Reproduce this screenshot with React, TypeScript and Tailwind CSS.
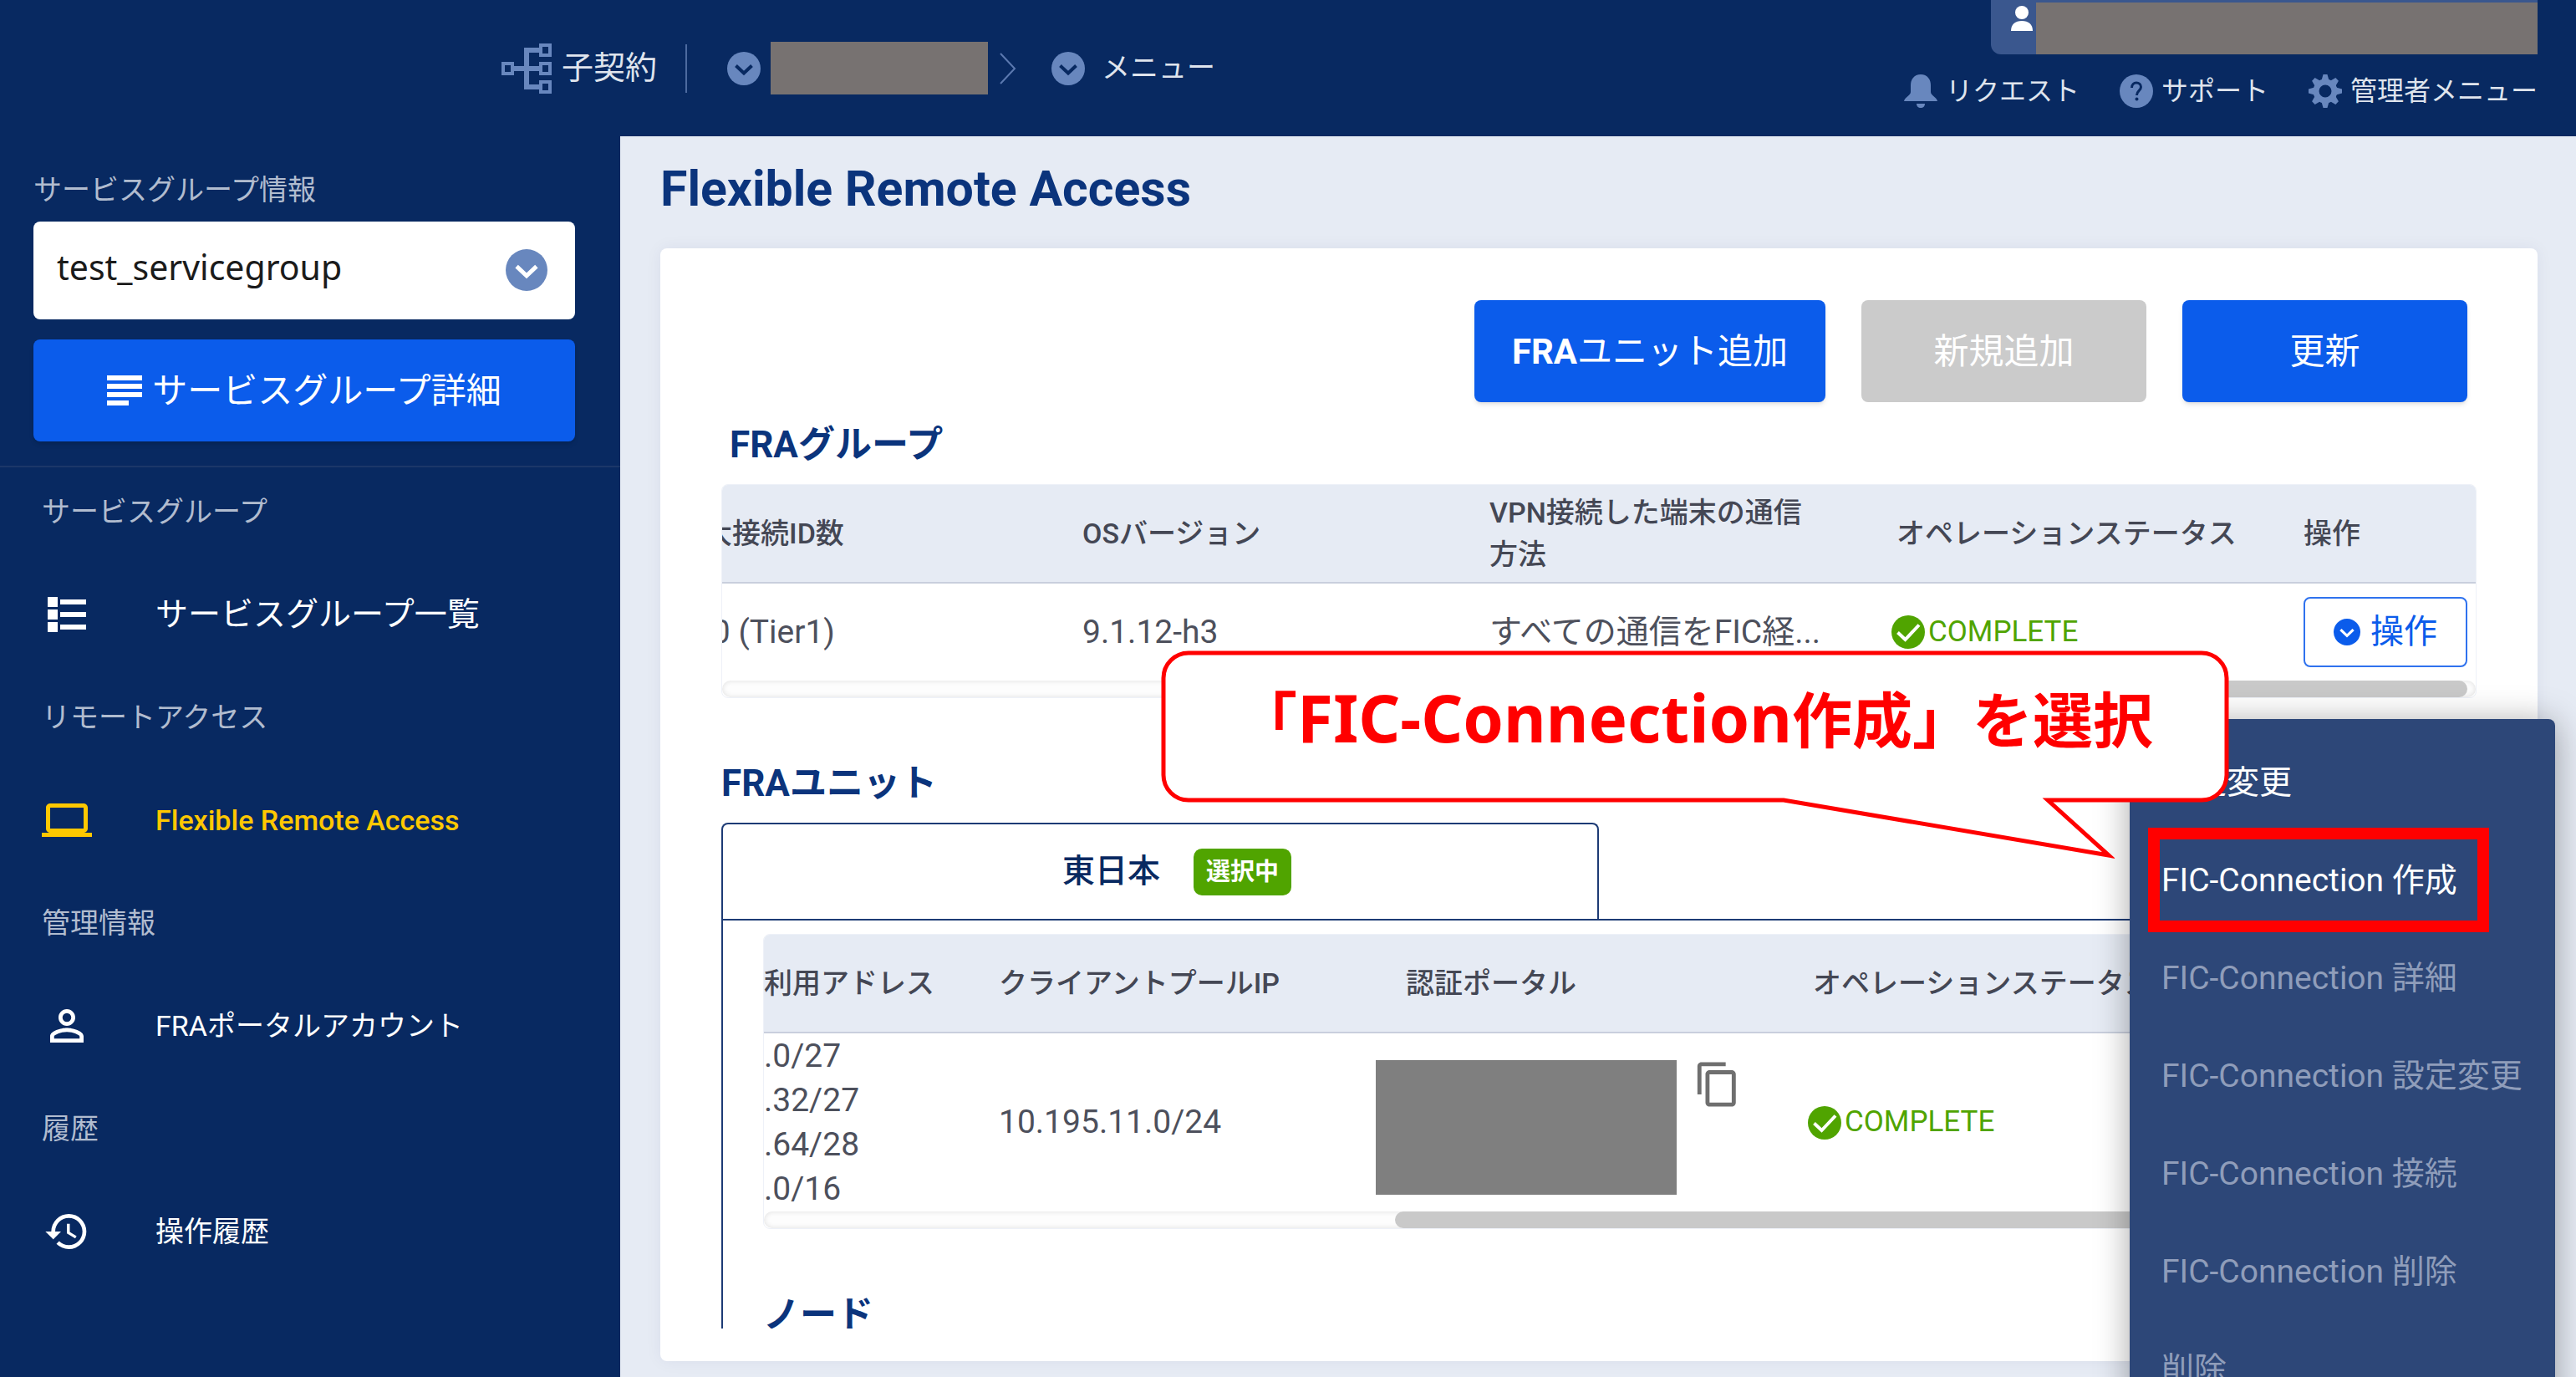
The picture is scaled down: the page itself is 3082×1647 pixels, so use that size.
import React from "react";
import {
  MdContentCopy,
  MdHistory,
  MdOutlineComputer,
  MdPersonOutline,
} from "react-icons/md";

const actionItems = [
  { label: "設定変更", enabled: true },
  { label: "FIC-Connection 作成", enabled: true },
  { label: "FIC-Connection 詳細", enabled: false },
  { label: "FIC-Connection 設定変更", enabled: false },
  { label: "FIC-Connection 接続", enabled: false },
  { label: "FIC-Connection 削除", enabled: false },
  { label: "削除", enabled: false },
];

const usedAddresses = [".0/27", ".32/27", ".64/28", ".0/16"];

type IconProps = { className?: string };

const ChevronCircle = ({
  className,
  stroke,
}: IconProps & { stroke: string }) => (
  <svg viewBox="0 0 40 40" className={className} aria-hidden="true">
    <circle cx="20" cy="20" r="20" fill="currentColor" />
    <path
      d="M10.5 16.5 20 25.5l9.5-9"
      fill="none"
      stroke={stroke}
      strokeWidth="4"
    />
  </svg>
);

const TreeIcon = ({ className }: IconProps) => (
  <svg
    viewBox="0 0 60 60"
    className={className}
    fill="none"
    stroke="currentColor"
    strokeWidth="4"
    aria-hidden="true"
  >
    <rect x="2" y="24" width="11" height="12" />
    <rect x="47" y="2" width="11" height="12" />
    <rect x="47" y="24" width="11" height="12" />
    <rect x="47" y="46" width="11" height="12" />
    <path d="M13 30h34M47 8H30v44h17" strokeWidth="6" />
  </svg>
);

const UserIcon = ({ className }: IconProps) => (
  <svg
    viewBox="0 0 26 30"
    className={className}
    fill="currentColor"
    aria-hidden="true"
  >
    <circle cx="13" cy="8" r="8" />
    <path d="M0 30c0-8 5-12 13-12s13 4 13 12Z" />
  </svg>
);

const BellIcon = ({ className }: IconProps) => (
  <svg
    viewBox="0 0 40 40"
    className={className}
    fill="currentColor"
    aria-hidden="true"
  >
    <path d="M20 0C12 0 8 6 8 13v8c0 4-7 6-8 11h40c-1-5-8-7-8-11v-8C32 6 28 0 20 0Z" />
    <path d="M15 35h10c0 3-2 5-5 5s-5-2-5-5Z" />
  </svg>
);

const HelpIcon = ({ className }: IconProps) => (
  <svg viewBox="0 0 40 40" className={className} aria-hidden="true">
    <circle cx="20" cy="20" r="20" fill="currentColor" />
    <path
      d="M14.500 16c0-4 2.500-6 5.500-6s5.500 2 5.500 5c0 4.500-5 4.500-5 10"
      fill="none"
      stroke="#082961"
      strokeWidth="3"
    />
    <circle cx="20.500" cy="29.500" r="2" fill="#082961" />
  </svg>
);

const GearIcon = ({ className }: IconProps) => (
  <svg
    viewBox="0 0 40 40"
    className={className}
    fill="currentColor"
    aria-hidden="true"
  >
    {[0, 45, 90, 135, 180, 225, 270, 315].map((angle) => (
      <path
        key={angle}
        d="M15 9 17.500 0h5L25 9Z"
        transform={`rotate(${angle} 20 20)`}
      />
    ))}
    <circle
      cx="20"
      cy="20"
      r="11"
      fill="none"
      stroke="currentColor"
      strokeWidth="7"
    />
  </svg>
);

const LinesIcon = ({ className }: IconProps) => (
  <svg
    viewBox="0 0 42 36"
    className={className}
    fill="currentColor"
    aria-hidden="true"
  >
    <path d="M0 0h42v6H0zM0 10h42v6H0zM0 20h42v6H0zM0 30h26v6H0z" />
  </svg>
);

const ListIcon = ({ className }: IconProps) => (
  <svg
    viewBox="0 0 46 42"
    className={className}
    fill="currentColor"
    aria-hidden="true"
  >
    <path d="M0 0h12v12H0zM0 15h12v12H0zM0 30h12v12H0zM15 3h31v6H15zM15 18h31v6H15zM15 33h31v6H15z" />
  </svg>
);

const Status = () => (
  <span className="-ml-1.5 flex items-center gap-1 text-[35px] text-[#50a400]">
    <svg viewBox="0 0 40 40" className="size-10 shrink-0" aria-hidden="true">
      <circle cx="20" cy="20" r="20" fill="#50a400" />
      <path
        d="m7.500 20.500 9 8.500L33 11.500"
        fill="none"
        stroke="#fff"
        strokeWidth="4"
      />
    </svg>
    COMPLETE
  </span>
);

const Scrollbar = ({ thumb }: { thumb: string }) => (
  <div className="h-5 rounded-full bg-[#fdfdfd] shadow-[inset_0_0_6px_rgba(0,0,0,0.12)]">
    <div className={`h-full rounded-full bg-[#c9c9c9] ${thumb}`} />
  </div>
);

const SideHeading = ({ children }: { children: React.ReactNode }) => (
  <h2 className="h-[50px] text-[34px] leading-[50px] text-[#b1bccf]">
    {children}
  </h2>
);

const SideLink = ({
  icon,
  className,
  children,
}: {
  icon: React.ReactNode;
  className: string;
  children: React.ReactNode;
}) => (
  <a href="#" className={`flex h-[50px] items-center ${className}`}>
    <span className="flex w-[60px] justify-center">{icon}</span>
    <span className="ml-[76px]">{children}</span>
  </a>
);

const Header = () => (
  <header className="relative flex h-[163px] shrink-0 items-start justify-between bg-[#082961] pr-[46px] pl-[600px] text-[#dfe4ed]">
    <nav className="flex h-[163px] items-center text-[34px]">
      <a href="#" className="flex items-center gap-3 text-[38px]">
        <TreeIcon className="size-[60px] text-[#6887be]" />
        子契約
      </a>
      <span className="ml-[34px] h-[58px] w-0.5 bg-[#4d6a9f]" />
      <button className="ml-12 flex items-center gap-3" aria-label="契約">
        <ChevronCircle className="size-10 text-[#6887be]" stroke="#082961" />
        <span className="h-[63px] w-[260px] bg-[#777271]" />
      </button>
      <svg
        viewBox="0 0 20 38"
        className="mx-[14px] h-[38px] w-5"
        fill="none"
        stroke="#5c79b0"
        strokeWidth="2"
        aria-hidden="true"
      >
        <path d="m1 1 17 18L1 37" />
      </svg>
      <button className="ml-7 flex items-center gap-5">
        <ChevronCircle className="size-10 text-[#6887be]" stroke="#082961" />
        メニュー
      </button>
    </nav>

    <div className="flex flex-col items-end text-[32px] leading-[40px]">
      <div className="flex h-[65px] w-[654px] gap-1 rounded-b-xl bg-[#3a578e] pl-6">
        <UserIcon className="mt-[7px] h-[30px] w-[26px] shrink-0 text-white" />
        <div className="mt-[3px] flex-1 bg-[#777271]" />
      </div>
      <div className="mt-6 flex gap-12">
        <a href="#" className="flex items-center gap-2.5">
          <BellIcon className="size-10 text-[#6887be]" />
          リクエスト
        </a>
        <a href="#" className="flex items-center gap-2.5">
          <HelpIcon className="size-10 text-[#6887be]" />
          サポート
        </a>
        <a href="#" className="flex items-center gap-2.5">
          <GearIcon className="size-10 text-[#6887be]" />
          管理者メニュー
        </a>
      </div>
    </div>
  </header>
);

const Sidebar = () => (
  <aside className="w-[742px] shrink-0 bg-[#082961] text-white">
    <div className="px-10">
      <label
        htmlFor="serviceGroup"
        className="block pt-[39px] text-[34px] leading-[50px] text-[#b1bccf]"
      >
        サービスグループ情報
      </label>
      <div className="relative mt-[13px] mr-[14px]">
        <select
          id="serviceGroup"
          className="h-[117px] w-full appearance-none rounded-lg bg-white px-7 pb-2 font-['Noto_Sans','Noto_Sans_CJK_JP',sans-serif] text-[41px] text-[#1b1b1b]"
        >
          <option>test_servicegroup</option>
        </select>
        <ChevronCircle
          className="pointer-events-none absolute top-[33px] right-[33px] size-[50px] text-[#6887be]"
          stroke="#fff"
        />
      </div>
      <button className="mt-6 mr-[14px] flex h-[122px] w-[648px] items-center justify-center gap-3 rounded-lg bg-[#0b5ceb] text-[42px] shadow-md">
        <LinesIcon className="h-9 w-[42px]" />
        サービスグループ詳細
      </button>
    </div>

    <nav className="mt-[29px] flex flex-col gap-[73px] border-t-2 border-[#1c3769] px-[50px] pt-7">
      <SideHeading>サービスグループ</SideHeading>
      <SideLink
        className="text-[39px]"
        icon={<ListIcon className="h-[42px] w-[46px]" />}
      >
        サービスグループ一覧
      </SideLink>
      <SideHeading>リモートアクセス</SideHeading>
      <SideLink
        className="text-[34px] font-medium text-[#ffc800]"
        icon={<MdOutlineComputer className="size-[60px]" />}
      >
        Flexible Remote Access
      </SideLink>
      <SideHeading>管理情報</SideHeading>
      <SideLink
        className="text-[34px]"
        icon={<MdPersonOutline className="size-[60px]" />}
      >
        FRAポータルアカウント
      </SideLink>
      <SideHeading>履歴</SideHeading>
      <SideLink
        className="text-[34px]"
        icon={<MdHistory className="size-14" />}
      >
        操作履歴
      </SideLink>
    </nav>
  </aside>
);

const GroupTable = () => (
  <div className="mt-[22px] shrink-0 overflow-hidden rounded-lg border border-[#eef1f8]">
    {/* scrolled to the right end */}
    <div className="flex justify-end">
      <table className="w-[2174px] shrink-0 table-fixed text-left text-[39px] text-[#4d505c]">
        <thead className="bg-[#e6ebf4] text-[34px] leading-[50px] text-[#444754]">
          <tr className="h-[117px] border-b-2 border-[#c9cfdd]">
            <th className="w-[487px] px-5 font-medium">最大接続ID数</th>
            <th className="w-[487px] px-5 font-medium">OSバージョン</th>
            <th className="w-[487px] px-5 font-medium">
              VPN接続した端末の通信
              <br />
              方法
            </th>
            <th className="w-[487px] px-5 font-medium">
              オペレーションステータス
            </th>
            <th className="px-5 font-medium">操作</th>
          </tr>
        </thead>
        <tbody>
          <tr className="h-[117px]">
            <td className="px-5">100 (Tier1)</td>
            <td className="px-5">9.1.12-h3</td>
            <td className="px-5">すべての通信をFIC経...</td>
            <td className="px-5">
              <Status />
            </td>
            <td className="pl-5">
              <button className="flex h-[84px] w-[196px] items-center justify-center gap-3 rounded-lg border-2 border-[#2f72ee] text-[40px] text-[#0b5ceb]">
                <ChevronCircle className="size-8" stroke="#fff" />
                操作
              </button>
            </td>
          </tr>
        </tbody>
      </table>
    </div>
    <Scrollbar thumb="ml-auto mr-[10px] w-1/2" />
  </div>
);

const UnitTable = () => (
  <div className="overflow-hidden rounded-lg border border-[#eef1f8]">
    <table className="w-full table-fixed text-left text-[39px] text-[#4d505c]">
      <thead className="bg-[#e6ebf4] text-[34px] leading-[50px] whitespace-nowrap text-[#444754]">
        <tr className="h-[117px] border-b-2 border-[#c9cfdd]">
          <th className="w-[261px] font-medium">利用アドレス</th>
          <th className="w-[487px] px-5 font-medium">クライアントプールIP</th>
          <th className="w-[487px] px-5 font-medium">認証ポータル</th>
          <th className="px-5 font-medium">オペレーションステータス</th>
        </tr>
      </thead>
      <tbody>
        <tr className="h-[214px]">
          <td className="leading-[53px]">
            {usedAddresses.map((address) => (
              <div key={address}>{address}</div>
            ))}
          </td>
          <td className="px-5">10.195.11.0/24</td>
          <td>
            <div className="-ml-4 flex items-start gap-5 pt-3">
              <div className="h-[161px] w-[360px] bg-[#7f7f7f]" />
              <button aria-label="コピー">
                <MdContentCopy className="size-[58px] text-[#6f6f6f]" />
              </button>
            </div>
          </td>
          <td className="px-5">
            <Status />
          </td>
        </tr>
      </tbody>
    </table>
    <Scrollbar thumb="ml-[755px] mr-[10px]" />
  </div>
);

const Heading = ({ children }: { children: React.ReactNode }) => (
  <h2 className="text-[44px] leading-[50px] font-bold text-[#0b347c]">
    {children}
  </h2>
);

const ActionMenu = () => (
  <ul className="absolute top-[860px] right-[25px] w-[509px] rounded-lg bg-[#2d4778] pt-[18px] pb-5 text-[39px] shadow-[0_4px_40px_rgba(0,0,0,0.35)]">
    {actionItems.map((item) => (
      <li key={item.label}>
        <button
          disabled={!item.enabled}
          className="h-[117px] w-full pl-[38px] text-left text-white disabled:text-[#8f9dba]"
        >
          {item.label}
        </button>
      </li>
    ))}
  </ul>
);

const Callout = () => (
  <div className="absolute top-[778px] right-[415px] w-[1278px]">
    <svg
      viewBox="0 0 1278 250"
      className="block h-[250px] w-full"
      fill="#fff"
      stroke="#f00"
      strokeWidth="5"
      aria-hidden="true"
    >
      <path d="M33 3H1245a30 30 0 0 1 30 30V149a30 30 0 0 1-30 30H1061L1134 245 745 179H33a30 30 0 0 1-30-30V33A30 30 0 0 1 33 3Z" />
    </svg>
    <p className="absolute inset-x-0 top-0 h-[160px] text-center font-['Noto_Sans','Noto_Sans_CJK_JP',sans-serif] text-[72px] leading-[160px] font-bold whitespace-nowrap text-[#f00]">
      「<span className="text-[78px]">FIC-Connection</span>作成」を選択
    </p>
  </div>
);

const App = () => {
  return (
    <div className="relative flex h-screen flex-col overflow-hidden bg-[#e6ebf4] font-['Roboto','Noto_Sans_CJK_JP',sans-serif]">
      <Header />
      <div className="flex min-h-0 flex-1">
        <Sidebar />
        <main className="flex min-w-0 flex-1 flex-col pr-[46px] pb-[19px] pl-12">
          <h1 className="pt-7 pb-[36px] text-[59px] leading-[70px] font-bold text-[#0b347c]">
            Flexible Remote Access
          </h1>
          <section className="flex min-h-0 flex-1 flex-col rounded-lg bg-white px-[73px] pb-[39px] shadow-[0_0_20px_rgba(9,42,98,0.06)]">
            <div className="flex min-h-0 flex-1 flex-col overflow-hidden">
              <div className="flex justify-end gap-[43px] pt-[62px] pr-[11px] text-[42px] text-white">
                <button className="h-[122px] w-[420px] rounded-lg bg-[#0b5ceb] shadow-md">
                  <span className="font-bold">FRA</span>ユニット追加
                </button>
                <button
                  disabled
                  className="h-[122px] w-[341px] rounded-lg bg-[#cbcbcb]"
                >
                  新規追加
                </button>
                <button className="h-[122px] w-[341px] rounded-lg bg-[#0b5ceb] shadow-md">
                  更新
                </button>
              </div>

              <div className="mt-[26px] pl-[10px]">
                <Heading>FRAグループ</Heading>
              </div>
              <GroupTable />

              <div className="mt-[77px]">
                <Heading>FRAユニット</Heading>
              </div>
              <button className="mt-[22px] flex h-[115px] w-[1050px] shrink-0 items-center justify-center gap-10 rounded-t-lg border-2 border-b-0 border-[#1d3b75] pl-10 text-[39px] font-medium text-[#082961]">
                東日本
                <span className="rounded-[10px] bg-[#50a400] px-[15px] text-[29px] leading-[56px] font-bold text-white">
                  選択中
                </span>
              </button>
              <div className="border-2 border-b-0 border-[#1d3b75] px-12 pt-4">
                <UnitTable />
                <div className="mt-[78px]">
                  <Heading>ノード</Heading>
                </div>
              </div>
            </div>
          </section>
        </main>
      </div>

      <ActionMenu />
      {/* red frame around the menu entry to pick */}
      <div className="pointer-events-none absolute top-[990px] right-[104px] h-[125px] w-[408px] border-[14px] border-[#f00]" />
      <Callout />
    </div>
  );
};

export default App;
